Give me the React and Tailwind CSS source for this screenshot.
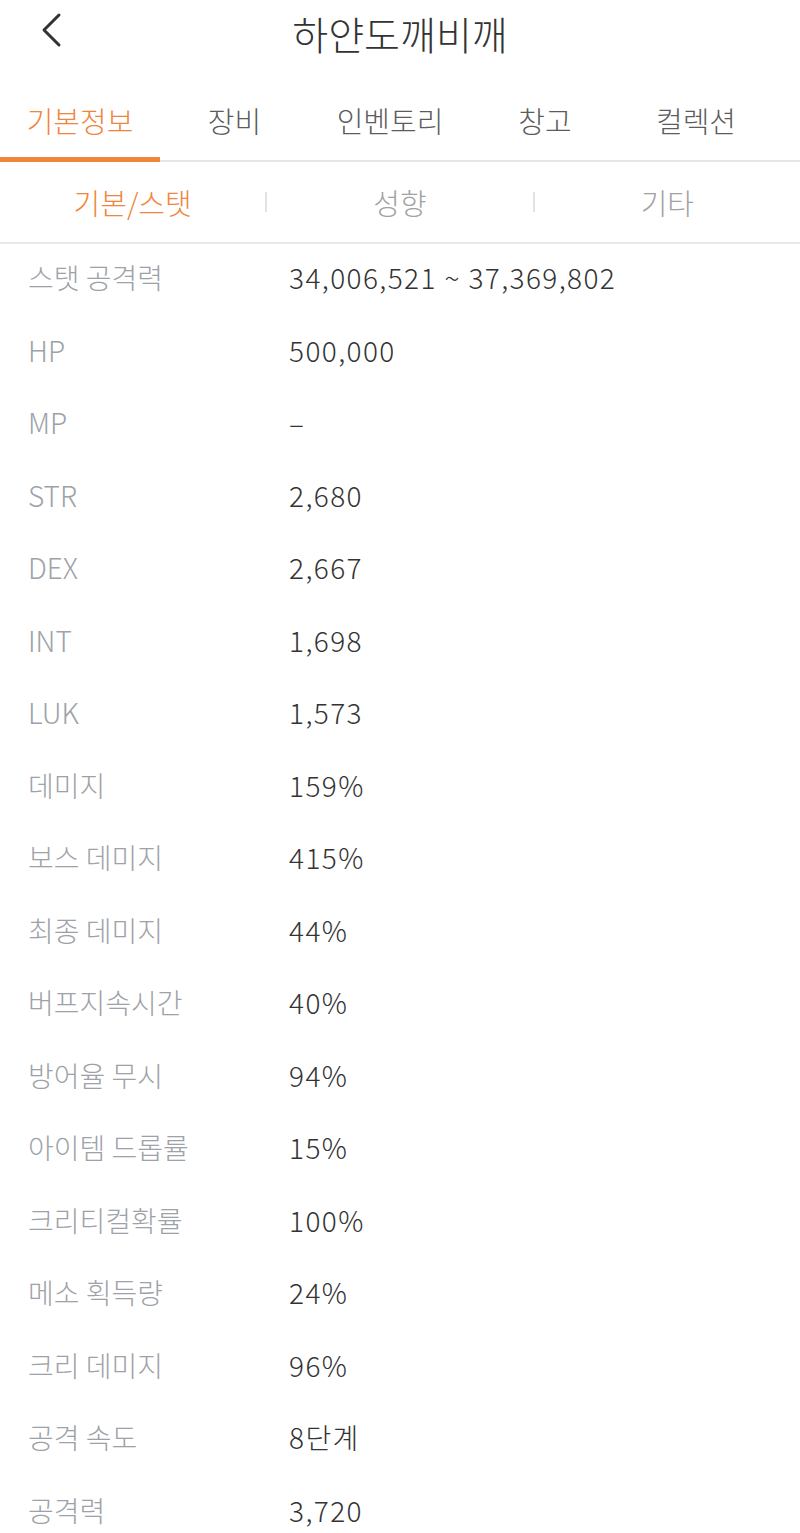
import React from "react";

const rows = [
  ["스탯 공격력", "34,006,521 ~ 37,369,802"],
  ["HP", "500,000"],
  ["MP", "-"],
  ["STR", "2,680"],
  ["DEX", "2,667"],
  ["INT", "1,698"],
  ["LUK", "1,573"],
  ["데미지", "159%"],
  ["보스 데미지", "415%"],
  ["최종 데미지", "44%"],
  ["버프지속시간", "40%"],
  ["방어율 무시", "94%"],
  ["아이템 드롭률", "15%"],
  ["크리티컬확률", "100%"],
  ["메소 획득량", "24%"],
  ["크리 데미지", "96%"],
  ["공격 속도", "8단계"],
  ["공격력", "3,720"],
];

const tabs = [
  ["기본정보", "w-[160px]", true],
  ["장비", "w-[149px]", false],
  ["인벤토리", "w-[162px]", false],
  ["창고", "w-[148px]", false],
  ["컬렉션", "w-[154px]", false],
];

export default function App() {
  return (
    <div
      className="w-[800px] h-[1533px] bg-white overflow-hidden font-light"
      style={{ fontFamily: '"Noto Sans CJK KR", "Noto Sans", sans-serif' }}
    >
      <div className="relative h-[66px] flex items-center justify-center">
        <svg
          className="absolute left-[36px] top-[10px]"
          width="32"
          height="40"
          viewBox="0 0 32 40"
          fill="none"
        >
          <path d="M23 5 L8 20 L23 35" stroke="#333" strokeWidth="3" strokeLinecap="round" strokeLinejoin="round" />
        </svg>
        <span className="text-[39px] text-[#333] leading-none">하얀도깨비깨</span>
      </div>
      <div className="h-[96px] flex items-end border-b-2 border-[#e6e6e6]">
        {tabs.map(([t, w, active]) => (
          <div key={t} className={`relative ${w} h-[80px] flex items-center justify-center`}>
            <span className={`text-[29px] leading-none ${active ? "text-[#f0853c]" : "text-[#5c5c5c]"}`}>{t}</span>
            {active && <div className="absolute left-0 right-0 bottom-[-2px] h-[5px] bg-[#f0853c]" />}
          </div>
        ))}
      </div>
      <div className="h-[82px] flex items-center border-b-2 border-[#e8e8e8]">
        <div className="flex-1 flex items-center justify-center">
          <span className="text-[29px] leading-none text-[#f0853c]">기본/스탯</span>
        </div>
        <div className="w-[2px] h-[20px] bg-[#e2e2e2]" />
        <div className="flex-1 flex items-center justify-center">
          <span className="text-[29px] leading-none text-[#a2a2a2]">성향</span>
        </div>
        <div className="w-[2px] h-[20px] bg-[#e2e2e2]" />
        <div className="flex-1 flex items-center justify-center">
          <span className="text-[29px] leading-none text-[#a2a2a2]">기타</span>
        </div>
      </div>
      <div className="-mt-[3px]">
        {rows.map(([k, v]) => (
          <div key={k} className="h-[72.5px] flex items-center">
            <span className="w-[289px] pl-[28px] text-[28px] leading-none text-[#9ea2a8]">{k}</span>
            <span className="text-[28px] leading-none tracking-[1.4px] text-[#333]">{v === "-" ? "–" : v}</span>
          </div>
        ))}
      </div>
    </div>
  );
}
